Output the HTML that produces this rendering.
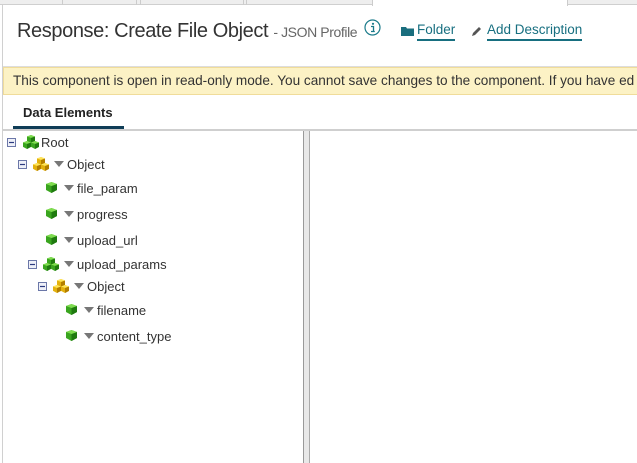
<!DOCTYPE html>
<html><head><meta charset="utf-8"><style>
*{margin:0;padding:0;box-sizing:border-box}
body{width:637px;height:463px;overflow:hidden;background:#fff;font-family:"Liberation Sans",sans-serif;position:relative;color:#333}
.a{position:absolute}
.t{position:absolute;font-size:13px;color:#333;white-space:nowrap;line-height:16px}
</style></head><body>
<div class="a" style="left:0;top:0;width:637px;height:5px;background:#eeeeee;border-bottom:1px solid #cfcfcf"></div>
<div class="a" style="left:62px;top:0;width:1px;height:5px;background:#ccc"></div>
<div class="a" style="left:136px;top:0;width:1px;height:5px;background:#ccc"></div>
<div class="a" style="left:140px;top:0;width:1px;height:5px;background:#ccc"></div>
<div class="a" style="left:243px;top:0;width:1px;height:5px;background:#ccc"></div>
<div class="a" style="left:246px;top:0;width:1px;height:5px;background:#ccc"></div>
<div class="a" style="left:372px;top:0;width:196px;height:6px;background:#fff;border-left:1px solid #ccc;border-right:1px solid #ccc"></div>
<div class="a" style="left:2px;top:5px;width:1px;height:458px;background:#d0d0d0"></div>
<div class="a" style="left:17px;top:18px;font-size:20px;letter-spacing:-0.4px;color:#333;white-space:nowrap;line-height:26px">Response: Create File Object <span style="font-size:14px;letter-spacing:-0.4px;color:#666">- JSON Profile</span></div>
<svg class="a" style="left:364px;top:19px" width="17" height="17" viewBox="0 0 17 17"><circle cx="8.5" cy="8.5" r="7.5" fill="none" stroke="#1a7a8a" stroke-width="1.2"/><circle cx="9" cy="4.8" r="1.1" fill="#1a7a8a"/><path d="M7 7.5h2.5v5h1.2M7 12.5h3.8" stroke="#1a7a8a" stroke-width="1.3" fill="none"/></svg>
<svg class="a" style="left:401px;top:26px" width="13" height="10" viewBox="0 0 13 10"><path d="M0 1h5l1 1.5h7V10H0z" fill="#1a6e7e"/></svg>
<div class="a" style="left:417px;top:22px;font-size:13.5px;color:#176f80;line-height:16px;padding-bottom:1px;border-bottom:2px solid #176f80">Folder</div>
<svg class="a" style="left:471px;top:25px" width="12" height="12" viewBox="0 0 12 12"><path d="M2 8l6-6 2 2-6 6-3 1z" fill="#555"/></svg>
<div class="a" style="left:487px;top:22px;font-size:13.5px;color:#176f80;line-height:16px;padding-bottom:1px;border-bottom:2px solid #176f80">Add Description</div>
<div class="a" style="left:3px;top:66px;width:634px;height:1px;background:#ddd"></div>
<div class="a" style="left:3px;top:67px;width:634px;height:28px;background:#fcf2c5;border:1px solid #f0dc9a;border-right:none"></div>
<div class="t" style="left:13px;top:73px;font-size:13.6px;color:#333">This component is open in read-only mode. You cannot save changes to the component. If you have ed</div>
<div class="t" style="left:23px;top:105px;font-weight:bold;color:#222">Data Elements</div>
<div class="a" style="left:13px;top:126px;width:111px;height:3px;background:#0f3d57"></div>
<div class="a" style="left:3px;top:129px;width:634px;height:2px;background:#cfcfcf"></div>
<div class="a" style="left:303px;top:131px;width:7px;height:332px;background:#e8e8e8;border-left:1px solid #999;border-right:1px solid #aaa"></div>

<svg width="0" height="0" style="position:absolute">
<defs>
<symbol id="m" viewBox="0 0 9 9"><rect x=".5" y=".5" width="8" height="8" fill="#eef0f8" stroke="#6b77a8"/><path d="M2 4.5h5" stroke="#2c3a80" stroke-width="1.2"/></symbol>
<symbol id="g" viewBox="0 0 11 11"><path d="M5.5 0L11 2v6l-5.5 3L0 8V2z" fill="#3aa51f"/><path d="M5.5 4v7L11 8V2z" fill="#1f7a0f"/><path d="M0 2l5.5 2L11 2 5.5 0z" fill="#7fdc4f"/></symbol>
<symbol id="y" viewBox="0 0 11 11"><path d="M5.5 0L11 2v6l-5.5 3L0 8V2z" fill="#e3b10e"/><path d="M5.5 4v7L11 8V2z" fill="#b37f00"/><path d="M0 2l5.5 2L11 2 5.5 0z" fill="#ffe55a"/></symbol>
<symbol id="tr" viewBox="0 0 10 6"><path d="M0 0h10L5 6z" fill="#777"/></symbol>
</defs></svg>
<svg class="a" style="left:7px;top:138px" width="9" height="9"><use href="#m"/></svg>
<svg class="a" style="left:23px;top:135px" width="16" height="15"><use href="#g" x="4" y="0" width="8" height="8"/><use href="#g" x="0" y="6" width="8" height="8"/><use href="#g" x="8" y="6" width="8" height="8"/></svg>
<div class="t" style="left:41px;top:135px">Root</div>
<svg class="a" style="left:18px;top:160px" width="9" height="9"><use href="#m"/></svg>
<svg class="a" style="left:33px;top:157px" width="16" height="15"><use href="#y" x="4" y="0" width="8" height="8"/><use href="#y" x="0" y="6" width="8" height="8"/><use href="#y" x="8" y="6" width="8" height="8"/></svg>
<svg class="a" style="left:54px;top:161px" width="10" height="6"><use href="#tr"/></svg>
<div class="t" style="left:67px;top:157px">Object</div>
<svg class="a" style="left:46px;top:182px" width="11" height="11"><use href="#g"/></svg>
<svg class="a" style="left:64px;top:185px" width="10" height="6"><use href="#tr"/></svg>
<div class="t" style="left:77px;top:181px">file_param</div>
<svg class="a" style="left:46px;top:208px" width="11" height="11"><use href="#g"/></svg>
<svg class="a" style="left:64px;top:211px" width="10" height="6"><use href="#tr"/></svg>
<div class="t" style="left:77px;top:207px">progress</div>
<svg class="a" style="left:46px;top:234px" width="11" height="11"><use href="#g"/></svg>
<svg class="a" style="left:64px;top:237px" width="10" height="6"><use href="#tr"/></svg>
<div class="t" style="left:77px;top:233px">upload_url</div>
<svg class="a" style="left:28px;top:260px" width="9" height="9"><use href="#m"/></svg>
<svg class="a" style="left:43px;top:257px" width="16" height="15"><use href="#g" x="4" y="0" width="8" height="8"/><use href="#g" x="0" y="6" width="8" height="8"/><use href="#g" x="8" y="6" width="8" height="8"/></svg>
<svg class="a" style="left:64px;top:261px" width="10" height="6"><use href="#tr"/></svg>
<div class="t" style="left:77px;top:257px">upload_params</div>
<svg class="a" style="left:38px;top:282px" width="9" height="9"><use href="#m"/></svg>
<svg class="a" style="left:53px;top:279px" width="16" height="15"><use href="#y" x="4" y="0" width="8" height="8"/><use href="#y" x="0" y="6" width="8" height="8"/><use href="#y" x="8" y="6" width="8" height="8"/></svg>
<svg class="a" style="left:74px;top:283px" width="10" height="6"><use href="#tr"/></svg>
<div class="t" style="left:87px;top:279px">Object</div>
<svg class="a" style="left:66px;top:304px" width="11" height="11"><use href="#g"/></svg>
<svg class="a" style="left:84px;top:307px" width="10" height="6"><use href="#tr"/></svg>
<div class="t" style="left:97px;top:303px">filename</div>
<svg class="a" style="left:66px;top:330px" width="11" height="11"><use href="#g"/></svg>
<svg class="a" style="left:84px;top:333px" width="10" height="6"><use href="#tr"/></svg>
<div class="t" style="left:97px;top:329px">content_type</div>
</body></html>
